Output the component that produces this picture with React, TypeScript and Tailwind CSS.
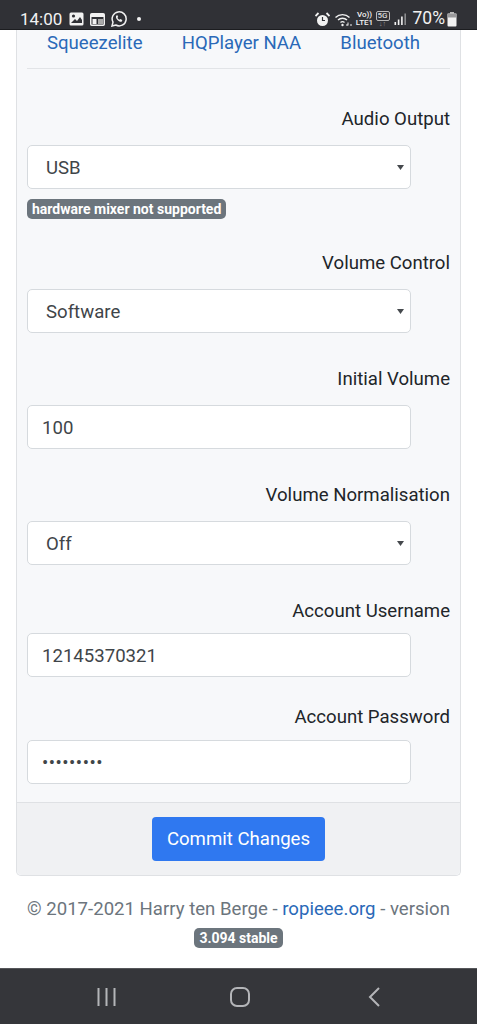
import React from "react";

const Label = ({ children, cls }: { children: React.ReactNode; cls: string }) => (
  <div className={"text-right text-[18.6px] leading-[27px] text-[#212529] pr-[10px] " + cls}>{children}</div>
);

const Select = ({ value, cls = "" }: { value: string; cls?: string }) => (
  <div className={"flex items-center justify-between w-[384px] h-[44px] ml-[10px] bg-white border border-[#d6dade] rounded-[5px] pl-[18px] pr-[6px] text-[18.6px] text-[#3f4549] " + cls}>
    <span className="pt-[3px]">{value}</span>
    <svg width="7" height="5" viewBox="0 0 7 5"><path d="M0 0h7L3.5 5z" fill="#45494d" /></svg>
  </div>
);

const Input = ({ value, cls = "" }: { value: string; cls?: string }) => (
  <div className={"flex items-center w-[384px] h-[44px] ml-[10px] bg-white border border-[#d6dade] rounded-[5px] pl-[14px] pt-[3px] text-[18.6px] text-[#3f4549] " + cls}>
    {value}
  </div>
);

const StatusBar = () => (
  <div className="h-[30px] pt-[9px] bg-[#303136] border-b border-[#1c1d20] flex items-center justify-between pl-[20px] pr-[20px] text-[#f2f2f2] shrink-0">
    <div className="flex items-center">
      <span className="text-[17px] leading-none">14:00</span>
      <svg width="15" height="14" viewBox="0 0 15 14" className="ml-[7px]">
        <rect x="0.5" y="0.5" width="14" height="13" rx="1.5" fill="#f2f2f2" />
        <circle cx="4.5" cy="4" r="1.6" fill="#303136" />
        <path d="M2 11l4-4 2 2 3-4 2 3v3z" fill="#303136" />
      </svg>
      <svg width="15" height="13" viewBox="0 0 15 13" className="ml-[6px]">
        <rect x="0.75" y="0.75" width="13.5" height="11.5" rx="1" fill="none" stroke="#f2f2f2" strokeWidth="1.5" />
        <rect x="1" y="1" width="13" height="3" fill="#f2f2f2" />
        <rect x="8" y="6" width="5" height="5" fill="#aaa" />
        <rect x="2.5" y="6" width="4" height="5" fill="#f2f2f2" />
      </svg>
      <svg width="16" height="16" viewBox="0 0 16 16" className="ml-[6px]">
        <path d="M1 15l1-3.8A7 7 0 1 1 4.8 14z" fill="none" stroke="#f2f2f2" strokeWidth="1.5" />
        <path d="M5.5 4.5c-1 1-.7 2.700 1 4.500s3.500 2.300 4.500 1.300l.3-1.300-2-1-.8.800c-1-.4-1.700-1.200-2.100-2.100l.8-.8-1-2z" fill="#f2f2f2" />
      </svg>
      <span className="ml-[10px] w-[4px] h-[4px] rounded-full bg-[#f2f2f2]" />
    </div>
    <div className="flex items-center">
      <svg width="15" height="15" viewBox="0 0 15 15">
        <circle cx="7.500" cy="8.500" r="5.500" fill="#f2f2f2" />
        <path d="M7.500 5v3.500h2.500" fill="none" stroke="#303136" strokeWidth="1.200" />
        <path d="M0.500 4L3.500 1M14.500 4L11.500 1" stroke="#f2f2f2" strokeWidth="1.800" />
      </svg>
      <svg width="18" height="15" viewBox="0 0 18 15" className="ml-[5px]">
        <path d="M0.500 5.500a10 10 0 0 1 14 0M3 8a6.500 6.500 0 0 1 9 0M5.500 10.500a3 3 0 0 1 4 0" fill="none" stroke="#f2f2f2" strokeWidth="1.400" />
        <circle cx="7.500" cy="13" r="1.200" fill="#f2f2f2" />
        <path d="M11 13h2M13 13.500v-3M15 13h2" stroke="#f2f2f2" strokeWidth="1" fill="none" />
      </svg>
      <div className="ml-[4px] flex flex-col items-center text-[8px] leading-[8px] font-medium w-[16px]">
        <span>Vo))</span>
        <span>LTE1</span>
      </div>
      <div className="ml-[3px] flex flex-col items-center w-[14px]">
        <span className="border border-[#bbb] rounded-[2px] text-[8px] leading-[8px] px-[1px] text-[#ddd] font-medium">5G</span>
        <span className="text-[7px] leading-[6px] text-[#999]">↓↑</span>
      </div>
      <svg width="13" height="12" viewBox="0 0 13 12" className="ml-[4px]">
        <rect x="0.500" y="9" width="1.600" height="3" fill="#f2f2f2" />
        <rect x="3.800" y="6.500" width="1.600" height="5.500" fill="#f2f2f2" />
        <rect x="7.100" y="3.500" width="1.600" height="8.500" fill="#f2f2f2" />
        <rect x="10.400" y="0.500" width="1.600" height="11.500" fill="#8a8b8e" />
      </svg>
      <span className="ml-[6px] text-[17.500px] leading-none">70%</span>
      <svg width="10" height="15" viewBox="0 0 10 15" className="ml-[2px]">
        <rect x="3" y="0" width="4" height="2" fill="#bbb" />
        <rect x="0.500" y="1.500" width="9" height="13" rx="1" fill="#f2f2f2" />
        <rect x="0.500" y="1.500" width="9" height="4" fill="#9a9a9c" />
      </svg>
    </div>
  </div>
);

const NavBar = () => (
  <div className="h-[56px] bg-[#35363a] border-t border-[#55565a] flex items-center justify-between pl-[97px] pr-[97px] shrink-0">
    <svg width="19" height="20" viewBox="0 0 19 20">
      <path d="M1.500 1v18M9.500 1v18M17.500 1v18" stroke="#b4b5b8" strokeWidth="2" />
    </svg>
    <svg width="20" height="20" viewBox="0 0 20 20" className="mr-[4px]">
      <rect x="1" y="1" width="18" height="18" rx="6" fill="none" stroke="#b4b5b8" strokeWidth="2" />
    </svg>
    <svg width="12" height="20" viewBox="0 0 12 20">
      <path d="M11 1L2 10l9 9" fill="none" stroke="#b4b5b8" strokeWidth="2" />
    </svg>
  </div>
);

export default function App() {
  return (
    <div className="w-[477px] h-[1024px] flex flex-col bg-white overflow-hidden" style={{ fontFamily: "Roboto, sans-serif" }}>
      <StatusBar />
      <div className="flex-1 flex flex-col">
        <div className="mx-[16px] w-[445px] bg-[#f7f8fa] border-x border-b border-[#dfe1e4] rounded-b-[5px]">
          <div className="mx-[10px] h-[39px] border-b border-[#e2e4e7] flex items-center justify-between pl-[20px] pr-[30px] pb-[11px] text-[18.6px] text-[#2a69b8]">
            <span>Squeezelite</span>
            <span>HQPlayer NAA</span>
            <span>Bluetooth</span>
          </div>
          <Label cls="mt-[37px] mb-[12px]">Audio Output</Label>
          <Select value="USB" />
          <div className="ml-[10px] mt-[10px] w-max h-[20px] flex items-center bg-[#6c757d] rounded-[5px] px-[5px] text-[14px] font-bold text-white">hardware mixer not supported</div>
          <Label cls="mt-[31px] mb-[12px]">Volume Control</Label>
          <Select value="Software" />
          <Label cls="mt-[33px] mb-[12px]">Initial Volume</Label>
          <Input value="100" />
          <Label cls="mt-[33px] mb-[12px]">Volume Normalisation</Label>
          <Select value="Off" />
          <Label cls="mt-[33px] mb-[8px]">Account Username</Label>
          <Input value="12145370321" />
          <Label cls="mt-[27px] mb-[9px]">Account Password</Label>
          <Input value="•••••••••" cls="tracking-[0.5px]" />
          <div className="mt-[18px] h-[73px] bg-[#f0f1f3] border-t border-[#dfe1e4] rounded-b-[5px] flex items-center justify-center">
            <button className="w-[173px] h-[44px] pt-[2px] bg-[#2f78f0] rounded-[4px] text-[18.6px] text-white">Commit Changes</button>
          </div>
        </div>
        <div className="mt-[20px] text-center text-[18.6px] leading-[27px] text-[#6c757d]">
          © 2017-2021 Harry ten Berge - <span className="text-[#2a69b8]">ropieee.org</span> - version
        </div>
        <div className="mt-[5px] mx-auto w-max h-[20px] flex items-center bg-[#6c757d] rounded-[5px] px-[5px] text-[14px] font-bold text-white">3.094 stable</div>
      </div>
      <NavBar />
    </div>
  );
}
